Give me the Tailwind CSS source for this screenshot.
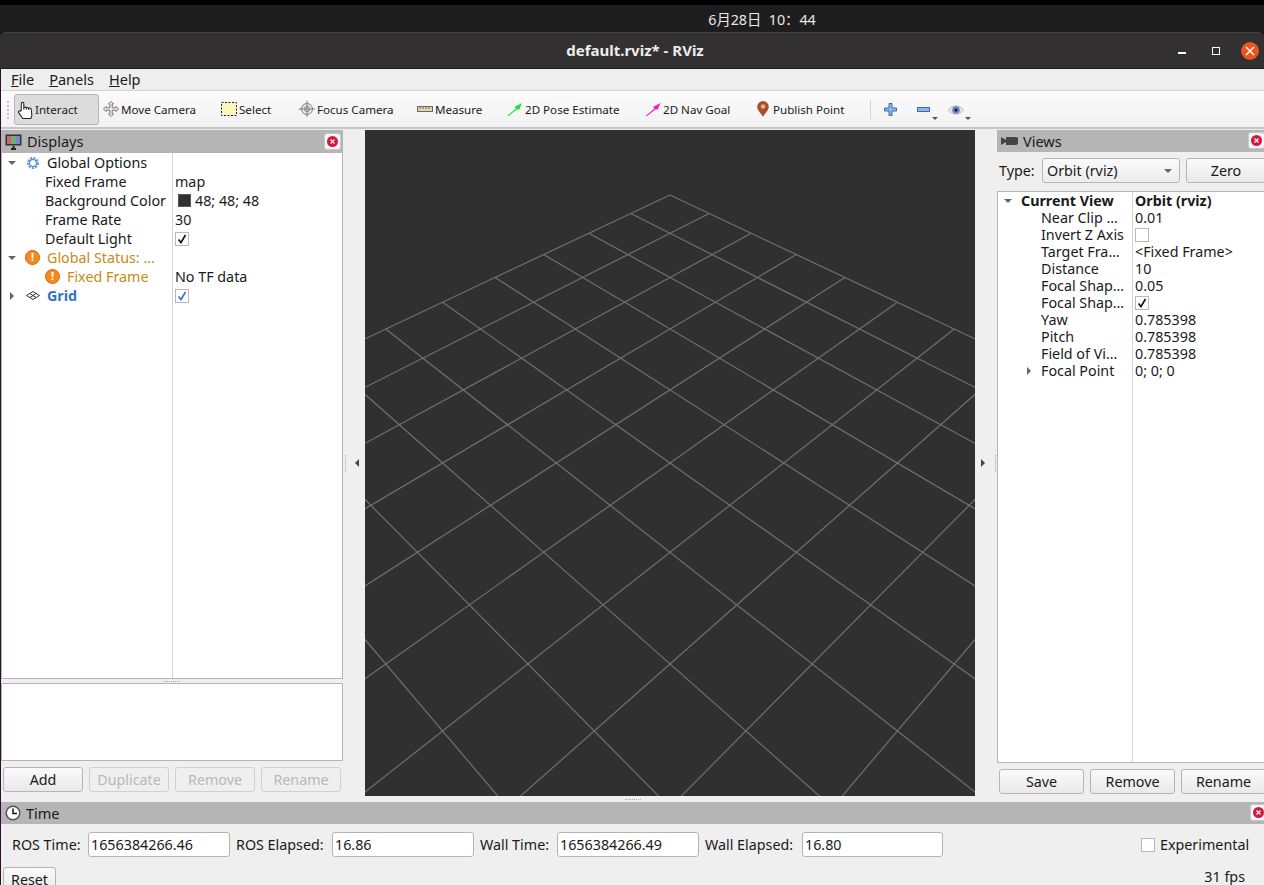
<!DOCTYPE html>
<html lang="zh">
<head>
  <meta charset="UTF-8">
  <title>default.rviz* - RViz</title>
  <script src="https://cdn.jsdelivr.net/npm/@tailwindcss/browser@4"></script>
</head>
<body class="w-[1264px] h-[885px] overflow-hidden flex flex-col bg-[#1d1d1d] font-['Noto_Sans','Noto_Sans_CJK_SC',sans-serif] text-[14px] text-[#1a1a1a]">

  <!-- desktop top bar -->
  <div class="h-[32px] shrink-0 bg-[#1d1d1d] border-t-[5px] border-black flex items-center justify-center">
    <span class="ml-[260px] mt-[2px] text-[14.3px] text-[#e8e8e8]">6月28日&nbsp;&nbsp;10：44</span>
  </div>

  <div class="flex-1 min-h-0 pl-[1px] bg-[#2c0f2a] flex flex-col">
    <!-- title bar -->
    <div class="h-[37px] shrink-0 -ml-[1px] bg-[#323030] border-b border-[#1a1a1a] border-t border-t-[#444] rounded-t-[6px] flex items-center relative">
      <div class="flex-1 text-center font-bold text-[15px] text-[#ececec] pl-[6px]">default.rviz* - RViz</div>
      <div class="absolute right-0 top-0 h-full flex items-center">
        <div class="w-[8px] h-[1.5px] bg-white mt-[5px] mr-[26px]"></div>
        <div class="w-[8px] h-[8px] border border-white mr-[21px]"></div>
        <div class="w-[18px] h-[18px] rounded-full bg-[#e95420] flex items-center justify-center mr-[5px]">
          <svg width="10" height="10" viewBox="0 0 10 10"><path d="M1 1 9 9M9 1 1 9" stroke="#fff" stroke-width="1.4"/></svg>
        </div>
      </div>
    </div>

    <div class="flex-1 min-h-0 w-[1290px] bg-[#efefef] flex flex-col">
      <!-- menu -->
      <div class="h-[22px] shrink-0 bg-[#eeeeee] border-b border-[#d4d4d4] flex items-center pl-[10px] gap-[15px] text-[14.5px]">
        <span><span class="underline">F</span>ile</span>
        <span><span class="underline">P</span>anels</span>
        <span><span class="underline">H</span>elp</span>
      </div>

      <!-- toolbar -->
      <div class="h-[38px] shrink-0 pt-[1px] bg-gradient-to-b from-[#fbfbfb] to-[#f2f2f2] border-b-2 border-[#c6c6c6] flex items-center text-[11.6px]">
        <div class="w-[3px] h-[18px] ml-[6px] mr-[4px] border-l-2 border-dotted border-[#c4c4c4]"></div>
        <div class="w-[85px] h-[31px] shrink-0 bg-[#dcdcdc] border border-[#b5b5b5] rounded-[3px] flex items-center pl-[2px] gap-[1px]">
          <svg width="17" height="18" viewBox="1 0 14 17"><path d="M4 9V2.5a1.2 1.2 0 0 1 2.4 0V8V6.5a1.2 1.2 0 0 1 2.3 0V8 7a1.2 1.2 0 0 1 2.3 0v1.5-.7a1.2 1.2 0 0 1 2.4 0L14 13.5c0 1-.5 2-1 3H5.500L1.500 11c-.8-1 .7-2.300 1.500-1.300z" fill="#fff" stroke="#222" stroke-width="1"/></svg>
          <span class="mt-[1px]">Interact</span>
        </div>
        <div class="w-[118px] shrink-0 pl-[4px] flex items-center gap-[2px]">
          <svg width="16" height="16" viewBox="0 0 16 16" fill="#eee" stroke="#777"><path d="M8 .5 10.500 3H9.200V6.800H13V5.500L15.500 8 13 10.500V9.200H9.200V13H10.500L8 15.500 5.500 13H6.800V9.200H3V10.500L.5 8 3 5.500V6.800H6.800V3H5.500z"/></svg>
          <span class="mt-[1px]">Move Camera</span>
        </div>
        <div class="w-[77px] shrink-0 pl-[4px] flex items-center gap-[2px]">
          <svg width="16" height="14" viewBox="0 0 16 14"><rect x=".5" y=".5" width="15" height="13" fill="#fdf7bd" stroke="#222" stroke-dasharray="2 1.500"/></svg>
          <span class="mt-[1px]">Select</span>
        </div>
        <div class="w-[119px] shrink-0 pl-[4px] flex items-center gap-[1px]">
          <svg width="18" height="18" viewBox="0 0 18 18" fill="none" stroke="#808080"><circle cx="9" cy="9" r="5.500" fill="#e8e8e8"/><circle cx="9" cy="9" r="2.500"/><path d="M9 .5V17M.5 9H17"/></svg>
          <span class="mt-[1px]">Focus Camera</span>
        </div>
        <div class="w-[90px] shrink-0 pl-[4px] flex items-center gap-[2px]">
          <svg width="16" height="6" viewBox="0 0 16 6"><rect x=".5" y=".5" width="15" height="5" fill="#e2d8a8" stroke="#666"/><path d="M3 1v2M6 1v2M9 1v2M12 1v2" stroke="#666"/></svg>
          <span class="mt-[1px]">Measure</span>
        </div>
        <div class="w-[138px] shrink-0 pl-[4px] flex items-center gap-[3px]">
          <svg width="15" height="13" viewBox="0 0 15 13"><path d="M0 13 9 5.500 7.500 4 15 0 12 7 10.500 6 1.500 13z" fill="#17e63c"/></svg>
          <span class="mt-[1px]">2D Pose Estimate</span>
        </div>
        <div class="w-[112px] shrink-0 pl-[4px] flex items-center gap-[2px]">
          <svg width="16" height="13" viewBox="0 0 15 13"><path d="M0 13 9 5.500 7.500 4 15 0 12 7 10.500 6 1.500 13z" fill="#f01bd0"/></svg>
          <span class="mt-[1px]">2D Nav Goal</span>
        </div>
        <div class="w-[117px] shrink-0 pl-[4px] flex items-center gap-[4px]">
          <svg width="12" height="16" viewBox="0 0 12 16"><path d="M6 0a5.800 5.800 0 0 0-5.800 5.800C.2 9.500 4 12 6 16c2-4 5.800-6.500 5.800-10.200A5.800 5.800 0 0 0 6 0z" fill="#a94f2c"/><circle cx="6" cy="5.500" r="2.200" fill="#e9b48e"/></svg>
          <span class="mt-[1px]">Publish Point</span>
        </div>
        <div class="w-px h-[19px] bg-[#d4d4d4] shrink-0"></div>
        <div class="ml-[13px] shrink-0 flex">
          <svg width="13" height="13" viewBox="0 0 13 13"><path d="M5 .5H8V5H12.500V8H8V12.500H5V8H.5V5H5z" fill="#8fb4e4" stroke="#3a6db0"/></svg>
        </div>
        <div class="ml-[20px] shrink-0 flex">
          <svg width="13" height="5" viewBox="0 0 13 5"><rect x=".5" y=".5" width="12" height="4" fill="#8fb4e4" stroke="#3a6db0"/></svg>
        </div>
        <div class="ml-[2px] mt-[18px] w-0 h-0 border-x-[3px] border-x-transparent border-t-[3px] border-t-[#555]"></div>
        <div class="ml-[10px] shrink-0 flex">
          <svg width="16" height="12" viewBox="0 0 16 12"><path d="M.5 6C4 .5 12 .5 15.500 6 12 11.500 4 11.500 .5 6z" fill="#e6e6e6" stroke="#bdbdbd"/><circle cx="8" cy="6" r="3.800" fill="#6d83c4"/><circle cx="8" cy="6" r="1.500" fill="#101830"/></svg>
        </div>
        <div class="ml-[1px] mt-[18px] w-0 h-0 border-x-[3px] border-x-transparent border-t-[3px] border-t-[#555]"></div>
      </div>

      <!-- main -->
      <div class="h-[666px] mt-[1px] shrink-0 flex">
        <!-- displays -->
        <div class="w-[342px] shrink-0 flex flex-col">
          <div class="h-[23px] shrink-0 bg-[#b5b5b5] flex items-center pl-[4px] gap-[5px] text-[14.5px] relative">
            <svg width="17" height="16" viewBox="0 0 17 16"><rect x=".5" y=".5" width="16" height="11" fill="#333"/><rect x="2" y="2" width="13" height="8" fill="#6fae7a"/><rect x="2" y="2" width="4" height="8" fill="#c86a6a"/><rect x="11" y="2" width="4" height="8" fill="#7a84c8"/><path d="M6 15h5M8.500 12v3" stroke="#222" stroke-width="2"/></svg>
            <span>Displays</span>
            <div class="absolute right-[2px] top-[3px] w-[17px] h-[17px] bg-[#f7f7f7] border border-[#c8c8c8] rounded-[3px] flex items-center justify-center">
              <div class="w-[11px] h-[11px] rounded-full bg-[#d3183c] flex items-center justify-center"><svg width="5" height="5" viewBox="0 0 5 5"><path d="M.5.5l4 4M4.500.5l-4 4" stroke="#fff" stroke-width="1.100"/></svg></div>
            </div>
          </div>
          <div class="h-[526px] shrink-0 bg-white border-x border-b border-[#b5b5b5] flex">
            <div class="w-[171px] shrink-0 border-r border-[#d4d4d4] text-[14.3px]">
              <div class="h-[19px] flex items-center whitespace-nowrap">
                <div class="ml-[6px] w-0 h-0 border-x-[4px] border-x-transparent border-t-[4px] border-t-[#666]"></div>
                <svg class="ml-[10px]" width="14" height="14" viewBox="0 0 14 14"><circle cx="7" cy="7" r="4.500" fill="none" stroke="#6a9ad8" stroke-width="3" stroke-dasharray="2 1"/><circle cx="7" cy="7" r="3.600" fill="none" stroke="#4f86cf"/></svg>
                <span class="ml-[7px]">Global Options</span>
              </div>
              <div class="h-[19px] flex items-center pl-[43px]">Fixed Frame</div>
              <div class="h-[19px] flex items-center pl-[43px] whitespace-nowrap">Background Color</div>
              <div class="h-[19px] flex items-center pl-[43px]">Frame Rate</div>
              <div class="h-[19px] flex items-center pl-[43px]">Default Light</div>
              <div class="h-[19px] flex items-center whitespace-nowrap text-[#c98a15]">
                <div class="ml-[6px] w-0 h-0 border-x-[4px] border-x-transparent border-t-[4px] border-t-[#666]"></div>
                <div class="ml-[9px] w-[15px] h-[15px] rounded-full bg-[#f58a1f] border border-[#d0660a] text-white text-[11px] font-bold flex items-center justify-center">!</div>
                <span class="ml-[7px]">Global Status: …</span>
              </div>
              <div class="h-[19px] flex items-center pl-[43px] whitespace-nowrap text-[#c98a15]">
                <div class="w-[15px] h-[15px] rounded-full bg-[#f58a1f] border border-[#d0660a] text-white text-[11px] font-bold flex items-center justify-center">!</div>
                <span class="ml-[7px]">Fixed Frame</span>
              </div>
              <div class="h-[19px] flex items-center whitespace-nowrap">
                <div class="ml-[8px] w-0 h-0 border-y-[4px] border-y-transparent border-l-[4px] border-l-[#666]"></div>
                <svg class="ml-[12px]" width="14" height="9" viewBox="0 0 14 9" fill="none" stroke="#333"><path d="M7 .5 13.500 4.500 7 8.500 .5 4.500zM4 2.500 10 6.500M10 2.500 4 6.500"/></svg>
                <span class="ml-[7px] font-bold text-[#2f75c0]">Grid</span>
              </div>
            </div>
            <div class="flex-1 pl-[2px] text-[14.3px]">
              <div class="h-[19px]"></div>
              <div class="h-[19px] flex items-center">map</div>
              <div class="h-[19px] flex items-center"><div class="ml-[3px] w-[13px] h-[13px] bg-[#303030] border border-[#555]"></div><span class="ml-[4px]">48; 48; 48</span></div>
              <div class="h-[19px] flex items-center">30</div>
              <div class="h-[19px] flex items-center">
                <div class="w-[14px] h-[14px] bg-white border border-[#b8b8b8] flex items-center justify-center"><svg width="10" height="10" viewBox="0 0 10 10"><path d="M1.500 5.500 4 8.500 8.500 1" fill="none" stroke="#111" stroke-width="1.600"/></svg></div>
              </div>
              <div class="h-[19px]"></div>
              <div class="h-[19px] flex items-center whitespace-nowrap">No TF data</div>
              <div class="h-[19px] flex items-center">
                <div class="w-[14px] h-[14px] bg-white border border-[#b8b8b8] flex items-center justify-center"><svg width="10" height="10" viewBox="0 0 10 10"><path d="M1.500 5.500 4 8.500 8.500 1" fill="none" stroke="#2f75c0" stroke-width="1.600"/></svg></div>
              </div>
            </div>
          </div>
          <div class="h-[4px] shrink-0 flex items-center justify-center"><div class="w-[16px] border-t border-dotted border-[#aaa]"></div></div>
          <div class="h-[78px] shrink-0 bg-white border border-[#b5b5b5]"></div>
          <div class="mt-[6px] pl-[2px] flex gap-[6px] text-[14.3px]">
            <div class="w-[80px] h-[25px] rounded-[3px] border border-[#b5b5b5] bg-gradient-to-b from-[#fafafa] to-[#e9e9e9] flex items-center justify-center">Add</div>
            <div class="w-[80px] h-[25px] rounded-[3px] border border-[#d0d0d0] bg-[#efefef] text-[#b8b8b8] flex items-center justify-center">Duplicate</div>
            <div class="w-[80px] h-[25px] rounded-[3px] border border-[#d0d0d0] bg-[#efefef] text-[#b8b8b8] flex items-center justify-center">Remove</div>
            <div class="w-[80px] h-[25px] rounded-[3px] border border-[#d0d0d0] bg-[#efefef] text-[#b8b8b8] flex items-center justify-center">Rename</div>
          </div>
        </div>

        <!-- left splitter -->
        <div class="w-[22px] shrink-0 flex items-center pl-[2px] gap-[9px]">
          <div class="h-[17px] border-l border-dotted border-[#aaa]"></div>
          <div class="w-0 h-0 border-y-[4px] border-y-transparent border-r-[4px] border-r-[#444]"></div>
        </div>

        <!-- 3d view -->
        <svg id="view" class="w-[610px] h-[666px] shrink-0 bg-[#303030]" viewBox="0 0 610 666"></svg>

        <!-- right splitter -->
        <div class="w-[22px] shrink-0 flex items-center pl-[6px] gap-[10px]">
          <div class="w-0 h-0 border-y-[4px] border-y-transparent border-l-[4px] border-l-[#444]"></div>
          <div class="h-[17px] border-l border-dotted border-[#aaa]"></div>
        </div>

        <!-- views -->
        <div class="w-[270px] shrink-0 flex flex-col">
          <div class="h-[22px] shrink-0 bg-[#b5b5b5] flex items-center pl-[4px] gap-[5px] text-[14.5px] relative">
            <svg width="17" height="10" viewBox="0 0 17 10"><path d="M0 1 5 4V1H14A3 3 0 0 1 14 9H5V6L0 9z" fill="#444"/></svg>
            <span class="mt-[2px]">Views</span>
            <div class="absolute right-[2px] top-[2px] w-[17px] h-[17px] bg-[#f7f7f7] border border-[#c8c8c8] rounded-[3px] flex items-center justify-center">
              <div class="w-[11px] h-[11px] rounded-full bg-[#d3183c] flex items-center justify-center"><svg width="5" height="5" viewBox="0 0 5 5"><path d="M.5.5l4 4M4.500.5l-4 4" stroke="#fff" stroke-width="1.100"/></svg></div>
            </div>
          </div>
          <div class="h-[25px] mt-[6px] shrink-0 flex items-center pl-[2px] text-[14.3px]">
            <span class="w-[43px]">Type:</span>
            <div class="w-[138px] h-[25px] rounded-[3px] border border-[#b5b5b5] bg-gradient-to-b from-[#fafafa] to-[#ececec] flex items-center pl-[4px] pr-[7px] justify-between">
              <span>Orbit (rviz)</span>
              <div class="w-0 h-0 border-x-[4px] border-x-transparent border-t-[4px] border-t-[#666]"></div>
            </div>
            <div class="ml-[6px] w-[80px] h-[25px] rounded-[3px] border border-[#b5b5b5] bg-gradient-to-b from-[#fafafa] to-[#e9e9e9] flex items-center justify-center">Zero</div>
          </div>
          <div class="h-[572px] mt-[8px] shrink-0 bg-white border border-[#b5b5b5] flex text-[14.3px] leading-[17px]">
            <div class="w-[135px] shrink-0 border-r border-[#d4d4d4] whitespace-nowrap">
              <div class="h-[17px] flex items-center font-bold">
                <div class="ml-[6px] w-0 h-0 border-x-[4px] border-x-transparent border-t-[4px] border-t-[#666]"></div>
                <span class="ml-[9px]">Current View</span>
              </div>
              <div class="h-[17px] flex items-center pl-[43px]">Near Clip …</div>
              <div class="h-[17px] flex items-center pl-[43px]">Invert Z Axis</div>
              <div class="h-[17px] flex items-center pl-[43px]">Target Fra…</div>
              <div class="h-[17px] flex items-center pl-[43px]">Distance</div>
              <div class="h-[17px] flex items-center pl-[43px]">Focal Shap…</div>
              <div class="h-[17px] flex items-center pl-[43px]">Focal Shap…</div>
              <div class="h-[17px] flex items-center pl-[43px]">Yaw</div>
              <div class="h-[17px] flex items-center pl-[43px]">Pitch</div>
              <div class="h-[17px] flex items-center pl-[43px]">Field of Vi…</div>
              <div class="h-[17px] flex items-center">
                <div class="ml-[29px] w-0 h-0 border-y-[4px] border-y-transparent border-l-[4px] border-l-[#666]"></div>
                <span class="ml-[10px]">Focal Point</span>
              </div>
            </div>
            <div class="flex-1 pl-[2px] whitespace-nowrap">
              <div class="h-[17px] flex items-center font-bold">Orbit (rviz)</div>
              <div class="h-[17px] flex items-center">0.01</div>
              <div class="h-[17px] flex items-center"><div class="w-[14px] h-[14px] bg-white border border-[#b8b8b8]"></div></div>
              <div class="h-[17px] flex items-center">&lt;Fixed Frame&gt;</div>
              <div class="h-[17px] flex items-center">10</div>
              <div class="h-[17px] flex items-center">0.05</div>
              <div class="h-[17px] flex items-center">
                <div class="w-[14px] h-[14px] bg-white border border-[#b8b8b8] flex items-center justify-center"><svg width="10" height="10" viewBox="0 0 10 10"><path d="M1.500 5.500 4 8.500 8.500 1" fill="none" stroke="#111" stroke-width="1.600"/></svg></div>
              </div>
              <div class="h-[17px] flex items-center">0.785398</div>
              <div class="h-[17px] flex items-center">0.785398</div>
              <div class="h-[17px] flex items-center">0.785398</div>
              <div class="h-[17px] flex items-center">0; 0; 0</div>
            </div>
          </div>
          <div class="mt-[6px] pl-[2px] flex gap-[6px] text-[14.3px]">
            <div class="w-[85px] h-[25px] rounded-[3px] border border-[#b5b5b5] bg-gradient-to-b from-[#fafafa] to-[#e9e9e9] flex items-center justify-center">Save</div>
            <div class="w-[85px] h-[25px] rounded-[3px] border border-[#b5b5b5] bg-gradient-to-b from-[#fafafa] to-[#e9e9e9] flex items-center justify-center">Remove</div>
            <div class="w-[85px] h-[25px] rounded-[3px] border border-[#b5b5b5] bg-gradient-to-b from-[#fafafa] to-[#e9e9e9] flex items-center justify-center">Rename</div>
          </div>
        </div>
      </div>

      <div class="h-[6px] shrink-0 flex items-center justify-center w-[1264px]"><div class="w-[16px] border-t border-dotted border-[#aaa]"></div></div>

      <!-- time -->
      <div class="w-[1266px] h-[22px] shrink-0 bg-[#b5b5b5] flex items-center pl-[4px] gap-[5px] text-[14.5px] relative">
        <svg width="16" height="16" viewBox="0 0 16 16"><circle cx="8" cy="8" r="6.800" fill="#fff" stroke="#555" stroke-width="1.500"/><path d="M8 3.500V8.500H12" fill="none" stroke="#111" stroke-width="1.500"/></svg>
        <span class="mt-[2px]">Time</span>
        <div class="absolute right-0 top-[2px] w-[17px] h-[17px] bg-[#f7f7f7] border border-[#c8c8c8] rounded-[3px] flex items-center justify-center">
          <div class="w-[11px] h-[11px] rounded-full bg-[#d3183c] flex items-center justify-center"><svg width="5" height="5" viewBox="0 0 5 5"><path d="M.5.5l4 4M4.500.5l-4 4" stroke="#fff" stroke-width="1.100"/></svg></div>
        </div>
      </div>
      <div class="w-[1263px] h-[25px] mt-[8px] shrink-0 flex items-center text-[14.3px] whitespace-nowrap">
        <span class="ml-[11px] w-[76px]">ROS Time:</span>
        <div class="w-[142px] h-[25px] bg-white border border-[#b5b5b5] rounded-[3px] flex items-center pl-[2px]">1656384266.46</div>
        <span class="ml-[6px] w-[96px]">ROS Elapsed:</span>
        <div class="w-[142px] h-[25px] bg-white border border-[#b5b5b5] rounded-[3px] flex items-center pl-[2px]">16.86</div>
        <span class="ml-[6px] w-[77px]">Wall Time:</span>
        <div class="w-[142px] h-[25px] bg-white border border-[#b5b5b5] rounded-[3px] flex items-center pl-[2px]">1656384266.49</div>
        <span class="ml-[6px] w-[97px]">Wall Elapsed:</span>
        <div class="w-[141px] h-[25px] bg-white border border-[#b5b5b5] rounded-[3px] flex items-center pl-[2px]">16.80</div>
        <div class="ml-[198px] w-[14px] h-[14px] bg-white border border-[#b8b8b8]"></div>
        <span class="ml-[5px]">Experimental</span>
      </div>
      <div class="w-[1263px] mt-[10px] flex justify-between items-start text-[14.3px]">
        <div class="ml-[2px] w-[53px] h-[25px] rounded-[3px] border border-[#b5b5b5] bg-gradient-to-b from-[#fafafa] to-[#e9e9e9] flex items-center justify-center">Reset</div>
        <span class="mt-[-1px] mr-[19px]">31 fps</span>
      </div>
    </div>
  </div>

  <script>
    // orbit camera: distance 10, yaw and pitch 45deg, fov 0.785 over the 666px high view
    const view = document.getElementById("view");
    const F = 333 / Math.tan(0.785398 / 2);
    const s = Math.SQRT1_2;

    function project(x, y) {
      const rx = x - 5, ry = y - 5, rz = -10 * s;
      const depth = -(rx * 0.5 + ry * 0.5 + rz * s);
      const right = (rx - ry) * s;
      const up = -rx * 0.5 - ry * 0.5 + rz * s;
      return [305 + right / depth * F, 333 - up / depth * F];
    }

    function addLine(a, b) {
      const line = document.createElementNS("http://www.w3.org/2000/svg", "line");
      line.setAttribute("x1", a[0]);
      line.setAttribute("y1", a[1]);
      line.setAttribute("x2", b[0]);
      line.setAttribute("y2", b[1]);
      line.setAttribute("stroke", "#707070");
      line.setAttribute("stroke-width", "1.2");
      view.appendChild(line);
    }

    for (let i = -5; i <= 5; i++) {
      addLine(project(i, -5), project(i, 5));
      addLine(project(-5, i), project(5, i));
    }
  </script>
</body>
</html>
